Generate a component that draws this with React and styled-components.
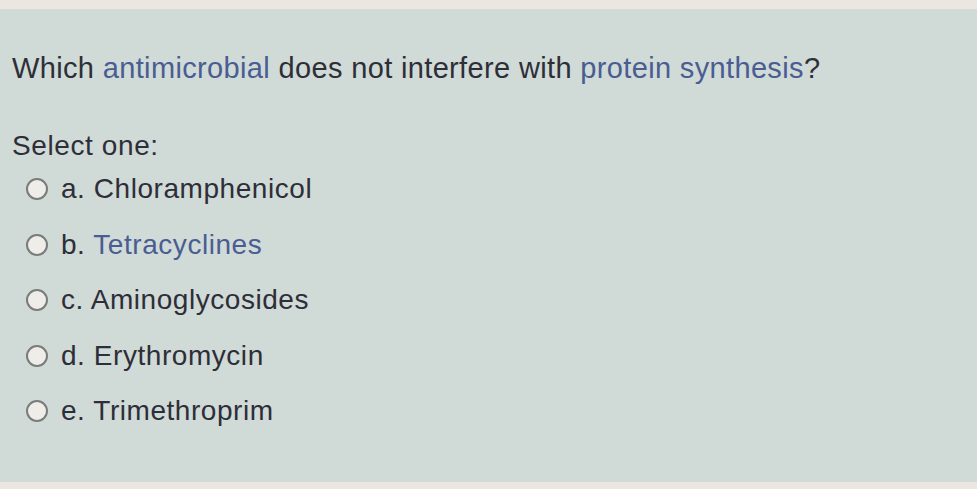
import React from "react";
import styled, { createGlobalStyle } from "styled-components";

const GlobalStyle = createGlobalStyle`
  html, body {
    margin: 0;
    padding: 0;
    background: #ebe7e0;
    font-family: "Liberation Sans", Arial, sans-serif;
  }
`;

const Page = styled.div`
  width: 977px;
  height: 489px;
  padding-top: 9px;
  box-sizing: border-box;
  background: #ebe7e0;
`;

const Panel = styled.div`
  height: 473px;
  background: #d0dad7;
  padding: 38px 0 0 12px;
  box-sizing: border-box;
  color: #2e2e38;
`;

const Question = styled.div`
  font-size: 29px;
  line-height: 42px;
  letter-spacing: 0.35px;
`;

const Link = styled.span`
  color: #4a5d92;
`;

const Prompt = styled.div`
  margin-top: 42px;
  font-size: 28px;
  line-height: 30px;
  letter-spacing: 0.6px;
`;

const Options = styled.div`
  display: flex;
  flex-direction: column;
  gap: 25.5px;
  margin-top: 13px;
  padding-left: 15px;
`;

const Option = styled.label`
  display: flex;
  align-items: center;
  gap: 13px;
  font-size: 28px;
  line-height: 30px;
  letter-spacing: 0.55px;
`;

const Radio = styled.span`
  width: 18px;
  height: 18px;
  border-radius: 50%;
  border: 2px solid #7a7b7c;
  background: #eeede8;
  flex-shrink: 0;
  margin-left: -1px;
`;

const options = [
  { key: "a.", text: "Chloramphenicol" },
  { key: "b.", text: "Tetracyclines", link: true },
  { key: "c.", text: "Aminoglycosides" },
  { key: "d.", text: "Erythromycin" },
  { key: "e.", text: "Trimethroprim" },
];

export default function App() {
  return (
    <>
      <GlobalStyle />
      <Page>
        <Panel>
          <Question>
            Which <Link>antimicrobial</Link> does not interfere with{" "}
            <Link>protein synthesis</Link>?
          </Question>
          <Prompt>Select one:</Prompt>
          <Options>
            {options.map((o) => (
              <Option key={o.key}>
                <Radio />
                <span>
                  {o.key} {o.link ? <Link>{o.text}</Link> : o.text}
                </span>
              </Option>
            ))}
          </Options>
        </Panel>
      </Page>
    </>
  );
}
